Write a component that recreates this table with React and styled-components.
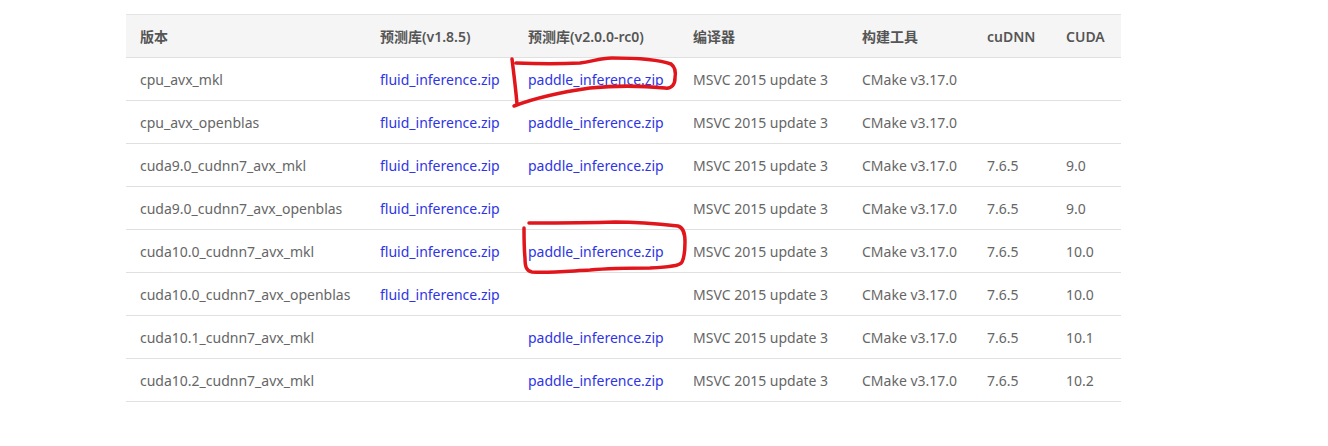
import React from 'react';
import styled, { createGlobalStyle } from 'styled-components';

const GlobalStyle = createGlobalStyle`
  body {
    margin: 0;
    background: #fff;
    font-family: "Noto Sans", "Noto Sans CJK SC", sans-serif;
  }
`;

const Page = styled.div`
  position: relative;
  padding: 14px 0 0 126px;
  width: 1328px;
  height: 446px;
  box-sizing: border-box;
`;

const Table = styled.table`
  width: 995px;
  border-collapse: collapse;
  table-layout: fixed;
  font-size: 14px;
  color: #666;
  border-top: 1px solid #e4e4e4;
`;

const HeadRow = styled.tr`
  background: #f5f5f5;
  height: 43px;
  border-bottom: 1px solid #e0e0e0;
`;

const Th = styled.th`
  box-sizing: border-box;
  text-align: left;
  font-weight: 600;
  color: #555;
  padding: 0 14px;
  width: ${(p) => p.w}px;
`;

const Row = styled.tr`
  height: 43px;
  border-bottom: 1px solid #e0e0e0;
`;

const Td = styled.td`
  padding: 0 14px;
  white-space: nowrap;
`;

const Link = styled.a`
  color: #2f35e4;
  text-decoration: none;
`;

const Marks = styled.svg`
  position: absolute;
  left: 0;
  top: 0;
  pointer-events: none;
`;

const columns = [
  ['版本', 240],
  ['预测库(v1.8.5)', 148],
  ['预测库(v2.0.0-rc0)', 165],
  ['编译器', 169],
  ['构建工具', 125],
  ['cuDNN', 79],
  ['CUDA', 69],
];

const F = 'fluid_inference.zip';
const P = 'paddle_inference.zip';

const rows = [
  ['cpu_avx_mkl', F, P, '', ''],
  ['cpu_avx_openblas', F, P, '', ''],
  ['cuda9.0_cudnn7_avx_mkl', F, P, '7.6.5', '9.0'],
  ['cuda9.0_cudnn7_avx_openblas', F, '', '7.6.5', '9.0'],
  ['cuda10.0_cudnn7_avx_mkl', F, P, '7.6.5', '10.0'],
  ['cuda10.0_cudnn7_avx_openblas', F, '', '7.6.5', '10.0'],
  ['cuda10.1_cudnn7_avx_mkl', '', P, '7.6.5', '10.1'],
  ['cuda10.2_cudnn7_avx_mkl', '', P, '7.6.5', '10.2'],
];

export default function App() {
  return (
    <Page>
      <GlobalStyle />
      <Table>
        <thead>
          <HeadRow>
            {columns.map(([name, w]) => (
              <Th key={name} w={w}>{name}</Th>
            ))}
          </HeadRow>
        </thead>
        <tbody>
          {rows.map(([ver, fluid, paddle, cudnn, cuda]) => (
            <Row key={ver}>
              <Td>{ver}</Td>
              <Td>{fluid && <Link href="#">{fluid}</Link>}</Td>
              <Td>{paddle && <Link href="#">{paddle}</Link>}</Td>
              <Td>MSVC 2015 update 3</Td>
              <Td>CMake v3.17.0</Td>
              <Td>{cudnn}</Td>
              <Td>{cuda}</Td>
            </Row>
          ))}
        </tbody>
      </Table>
      {/* hand-drawn red marks around two links */}
      <Marks width="1328" height="446">
        <g fill="none" stroke="#e0161c" strokeWidth="3.5" strokeLinecap="round" strokeLinejoin="round">
          <path d="M512 59 C514 75 516 92 517 104 M514 106 C535 98 555 93 590 88 C620 85 645 86 665 88 C672 89 675 84 675 78 C676 72 675 67 671 64 C660 60 640 58 612 58 C598 58 592 62 580 63 C560 64 540 64 516 63" />
          <path d="M529 223 C560 223 585 223 615 222 C640 222 660 224 678 226 C684 228 685 234 685 242 C685 250 684 258 682 262 C680 266 670 267 650 268 C630 268 612 268 590 270 C570 271 550 273 532 272 C526 271 525 266 525 258 C524 248 524 238 524 228" />
        </g>
      </Marks>
    </Page>
  );
}
